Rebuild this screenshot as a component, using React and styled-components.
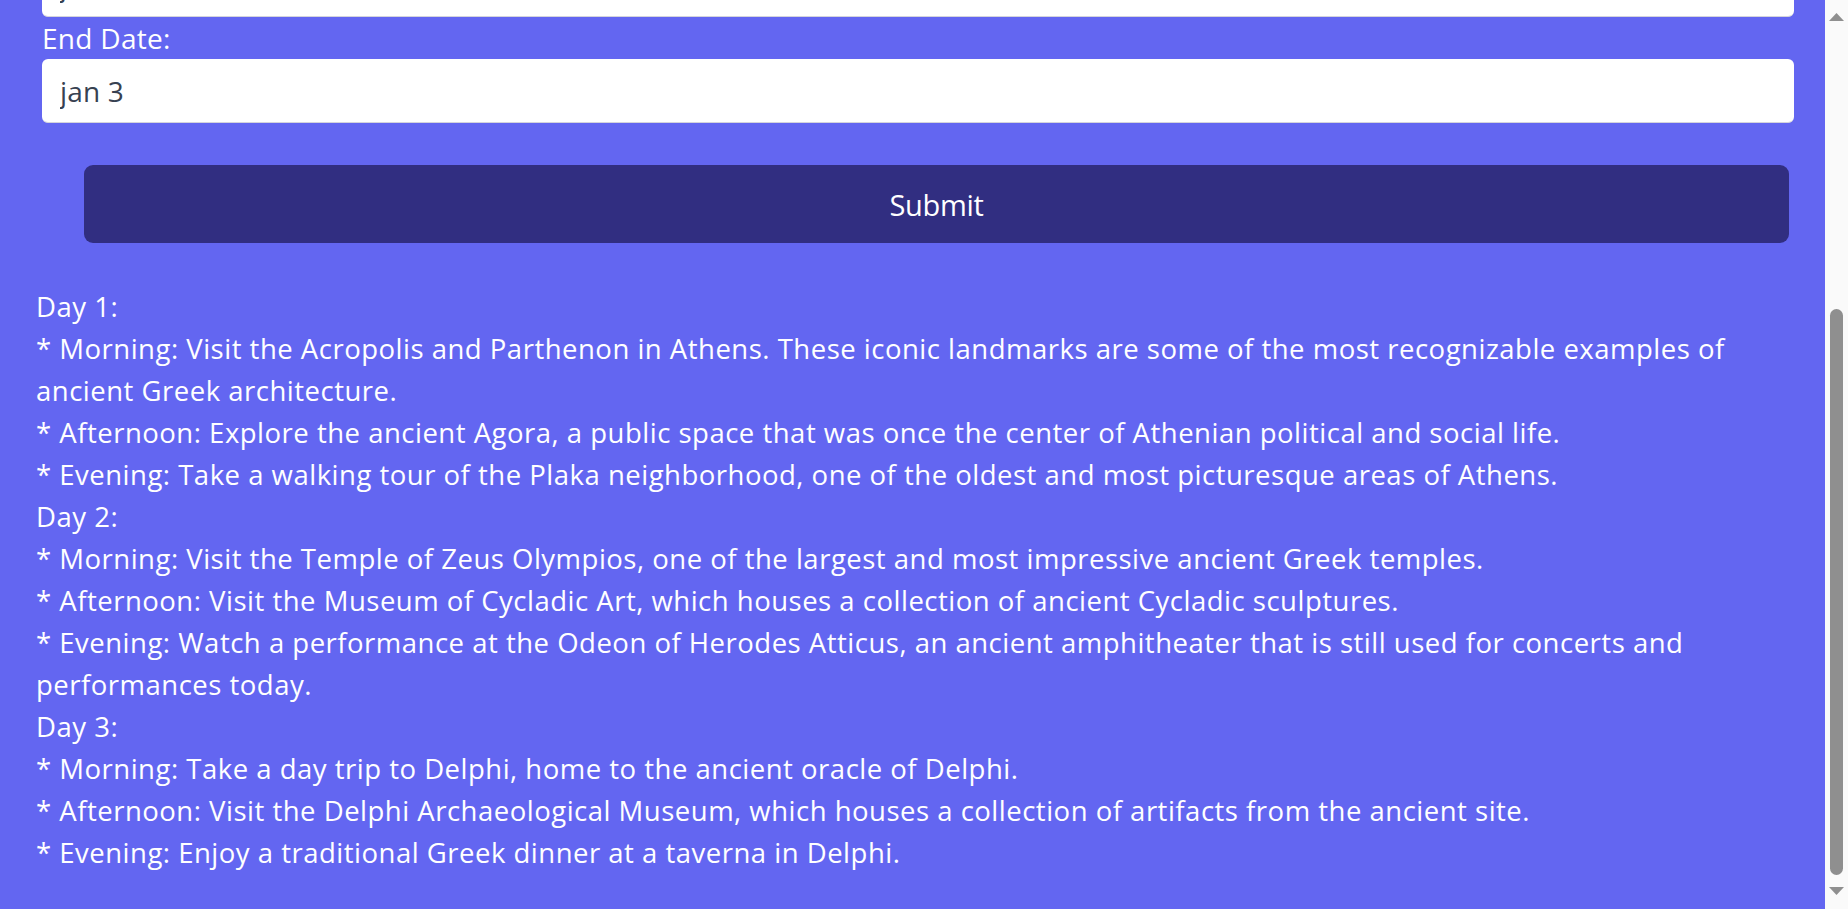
import React, { useLayoutEffect, useRef, useState, useCallback } from 'react';
import styled, { createGlobalStyle } from 'styled-components';

const GlobalStyle = createGlobalStyle`
  html, body { margin: 0; height: 100%; background: #6366f1; }
  body { font-family: "Open Sans", "Noto Sans", sans-serif; }
  #root { height: 100%; }
  * { box-sizing: border-box; }
`;

const Shell = styled.div`
  display: flex;
  height: 100vh;
  overflow: hidden;
  background: #6366f1;
`;

const Scroller = styled.div`
  flex: 1;
  min-width: 0;
  height: 100%;
  overflow-y: auto;
  scrollbar-width: none;
  &::-webkit-scrollbar { display: none; }
`;

const Rail = styled.div`
  display: flex;
  flex-direction: column;
  width: 23px;
  flex-shrink: 0;
  background: #fafafa;
`;

const ArrowButton = styled.div`
  display: flex;
  justify-content: center;
  align-items: flex-start;
  height: 23px;
  padding-top: ${(p) => (p.$down ? '1px' : '13px')};
  svg { display: block; }
`;

const Track = styled.div`
  flex: 1;
  display: flex;
  flex-direction: column;
  padding: 11px 0;
`;

const Thumb = styled.div`
  width: 13px;
  margin-left: 5px;
  border-radius: 7px;
  background: #8f8f8f;
  flex-shrink: 0;
`;

const Page = styled.main`
  display: flex;
  flex-direction: column;
  padding: 36px 0 35px;
  color: #ffffff;
`;

const Title = styled.h1`
  margin: 0 0 45px 42px;
  font-size: 45px;
  line-height: 60px;
  font-weight: 700;
  color: #ffffff;
`;

const Form = styled.form`
  display: flex;
  flex-direction: column;
  padding: 0 31px 0 42px;
`;

const Field = styled.div`
  display: flex;
  flex-direction: column;
`;

const Label = styled.label`
  display: block;
  height: 42px;
  font-size: 28px;
  line-height: 42px;
  letter-spacing: 0.3px;
  color: #ffffff;
`;

const Input = styled.input`
  display: block;
  width: 100%;
  height: 64px;
  padding: 0 18px;
  border: none;
  border-bottom: 1px solid #d4d4dc;
  border-radius: 6px;
  background: #ffffff;
  font-family: "Open Sans", "Noto Sans", sans-serif;
  font-size: 28px;
  letter-spacing: 0.2px;
  color: #374151;
  outline: none;
`;

const SubmitButton = styled.button`
  display: block;
  height: 78px;
  margin: 42px 5px 0 42px;
  border: none;
  border-radius: 9px;
  background: #312e81;
  color: #ffffff;
  font-family: "Open Sans", "Noto Sans", sans-serif;
  font-size: 29px;
  letter-spacing: -0.3px;
  cursor: pointer;
`;

const Output = styled.div`
  margin-top: 43px;
  padding: 0 80px 0 36px;
  font-size: 27.5px;
  line-height: 42px;
  letter-spacing: 0.5px;
  color: #ffffff;
`;

const Line = styled.div`
  white-space: pre-wrap;
`;

const fields = [
  { id: 'destination', label: 'Destination:', value: 'Greece' },
  { id: 'interests', label: 'Interests:', value: 'history' },
  { id: 'start', label: 'Start Date:', value: 'jan 1' },
  { id: 'end', label: 'End Date:', value: 'jan 3' },
];

const lines = [
  'Day 1:',
  '* Morning: Visit the Acropolis and Parthenon in Athens. These iconic landmarks are some of the most recognizable examples of ancient Greek architecture.',
  '* Afternoon: Explore the ancient Agora, a public space that was once the center of Athenian political and social life.',
  '* Evening: Take a walking tour of the Plaka neighborhood, one of the oldest and most picturesque areas of Athens.',
  'Day 2:',
  '* Morning: Visit the Temple of Zeus Olympios, one of the largest and most impressive ancient Greek temples.',
  '* Afternoon: Visit the Museum of Cycladic Art, which houses a collection of ancient Cycladic sculptures.',
  '* Evening: Watch a performance at the Odeon of Herodes Atticus, an ancient amphitheater that is still used for concerts and performances today.',
  'Day 3:',
  '* Morning: Take a day trip to Delphi, home to the ancient oracle of Delphi.',
  '* Afternoon: Visit the Delphi Archaeological Museum, which houses a collection of artifacts from the ancient site.',
  '* Evening: Enjoy a traditional Greek dinner at a taverna in Delphi.',
];

const Triangle = ({ down }) => (
  <svg width="15" height="8" viewBox="0 0 15 8">
    <path d={down ? 'M0 0 H15 L7.5 8 Z' : 'M7.5 0 L15 8 H0 Z'} fill="#8f8f8f" />
  </svg>
);

export default function App() {
  const scrollerRef = useRef(null);
  const trackRef = useRef(null);
  const [thumb, setThumb] = useState({ top: 275, height: 566 });

  const measure = useCallback(() => {
    const s = scrollerRef.current;
    const t = trackRef.current;
    if (!s || !t) return;
    const inner = t.clientHeight - 22;
    const height = Math.round((inner * s.clientHeight) / s.scrollHeight);
    const top = Math.round((inner * s.scrollTop) / s.scrollHeight);
    setThumb({ top, height });
  }, []);

  useLayoutEffect(() => {
    const s = scrollerRef.current;
    if (s) s.scrollTop = s.scrollHeight;
    measure();
  }, [measure]);

  return (
    <>
      <GlobalStyle />
      <Shell>
        <Scroller ref={scrollerRef} onScroll={measure}>
          <Page>
            <Title>Trip Planner</Title>
            <Form onSubmit={(e) => e.preventDefault()}>
              {fields.map((f) => (
                <Field key={f.id}>
                  <Label htmlFor={f.id}>{f.label}</Label>
                  <Input id={f.id} defaultValue={f.value} />
                </Field>
              ))}
              <SubmitButton type="submit">Submit</SubmitButton>
            </Form>
            <Output>
              {lines.map((l, i) => (
                <Line key={i}>{l}</Line>
              ))}
            </Output>
          </Page>
        </Scroller>
        <Rail>
          <ArrowButton>
            <Triangle />
          </ArrowButton>
          <Track ref={trackRef}>
            <Thumb style={{ marginTop: thumb.top, height: thumb.height }} />
          </Track>
          <ArrowButton $down>
            <Triangle down />
          </ArrowButton>
        </Rail>
      </Shell>
    </>
  );
}
